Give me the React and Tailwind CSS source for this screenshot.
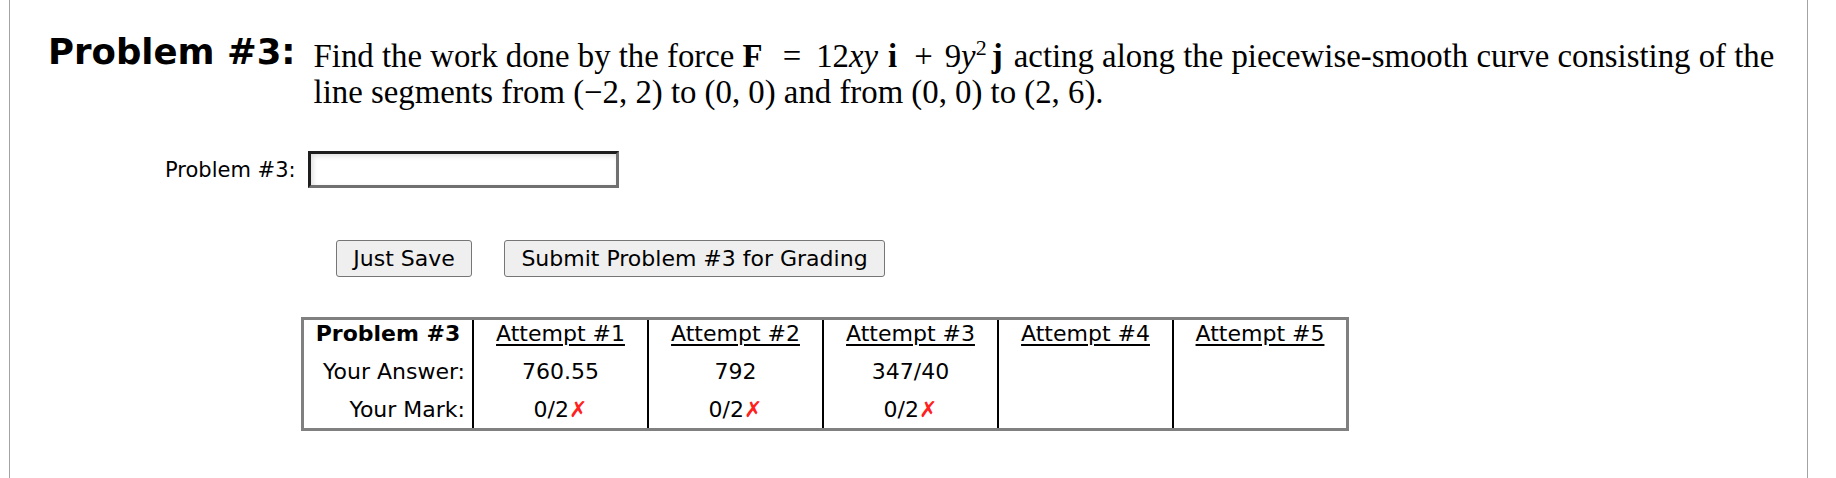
import React from "react";

const sans = { fontFamily: '"DejaVu Sans", Verdana, sans-serif' };

function Btn({ children, className = "" }) {
  return (
    <button
      className={`h-[37px] rounded-[3px] border border-[#767676] bg-[#efefef] text-[22px] leading-[26px] text-black whitespace-nowrap font-['DejaVu_Sans',sans-serif] ${className}`}
    >
      {children}
    </button>
  );
}

function Col({ head, answer, mark, first, w }) {
  return (
    <div
      className={`flex flex-col gap-[12px] pt-[1px] pb-[5px] ${first ? "" : "border-l-2 border-black"} ${w}`}
    >
      <div className={`h-[26px] leading-[26px] ${first ? "text-center font-bold" : "text-center"}`}>
        {first ? head : <span className="underline underline-offset-[3px]">{head}</span>}
      </div>
      <div className={`h-[26px] leading-[26px] ${first ? "text-right pr-[7px]" : "text-center"}`}>{answer}</div>
      <div className={`h-[26px] leading-[26px] ${first ? "text-right pr-[7px]" : "text-center"}`}>
        {mark}
        {mark && !first ? <span className="text-[#ff2020]">✗</span> : null}
      </div>
    </div>
  );
}

export default function App() {
  return (
    <div className="w-[1836px] h-[478px] bg-white overflow-hidden">
      <div className="ml-[9px] w-[1799px] h-[478px] border-x border-[#a3a3a3] pt-[34px]">
        <div className="flex items-start pl-[38px] pr-[6px]">
          <div
            className="text-[35.5px] leading-[36px] font-bold text-black shrink-0"
            style={sans}
          >
            Problem #3:
          </div>
          <div className="ml-[18px] mt-[4px] flex-1 text-[32.8px] leading-[36px] text-black font-['Liberation_Serif',serif]">
            Find the work done by the force <b>F</b>
            <span className="ml-[20px] mr-[15px]">=</span>12<i>xy</i>
            <b className="ml-[10px]">i</b>
            <span className="ml-[17px] mr-[12px]">+</span>9<i>y</i>
            <span className="inline-block align-[0.55em] text-[22px] leading-[20px]">2</span>
            <b className="ml-[5px] mr-[3px]">j</b> acting along the piecewise-smooth curve consisting of the line
            segments from (−2, 2) to (0, 0) and from (0, 0) to (2, 6).
          </div>
        </div>

        <div className="mt-[41px] flex items-center" style={sans}>
          <div className="ml-[155px] text-[21px] leading-[26px] text-black">Problem #3:</div>
          <input
            type="text"
            className="ml-[12px] h-[37px] w-[311px] border-[3px] border-t-[#1e1e1e] border-l-[#1e1e1e] border-b-[#707070] border-r-[#707070] bg-white shadow-[inset_2px_2px_5px_rgba(0,0,0,0.13)] outline-none"
          />
        </div>

        <div className="mt-[52px] flex pl-[326px]">
          <Btn className="w-[136px]">Just Save</Btn>
          <Btn className="ml-[32px] w-[381px]">Submit Problem #3 for Grading</Btn>
        </div>

        <div
          className="mt-[40px] ml-[291px] flex w-fit border-[3px] border-[#808080] text-[22px] text-black"
          style={sans}
        >
          <Col first head="Problem #3" answer="Your Answer:" mark="Your Mark:" w="w-[168px]" />
          <Col head="Attempt #1" answer="760.55" mark="0/2" w="w-[175px]" />
          <Col head="Attempt #2" answer="792" mark="0/2" w="w-[175px]" />
          <Col head="Attempt #3" answer="347/40" mark="0/2" w="w-[175px]" />
          <Col head="Attempt #4" answer="" mark="" w="w-[175px]" />
          <Col head="Attempt #5" answer="" mark="" w="w-[174px]" />
        </div>
      </div>
    </div>
  );
}
